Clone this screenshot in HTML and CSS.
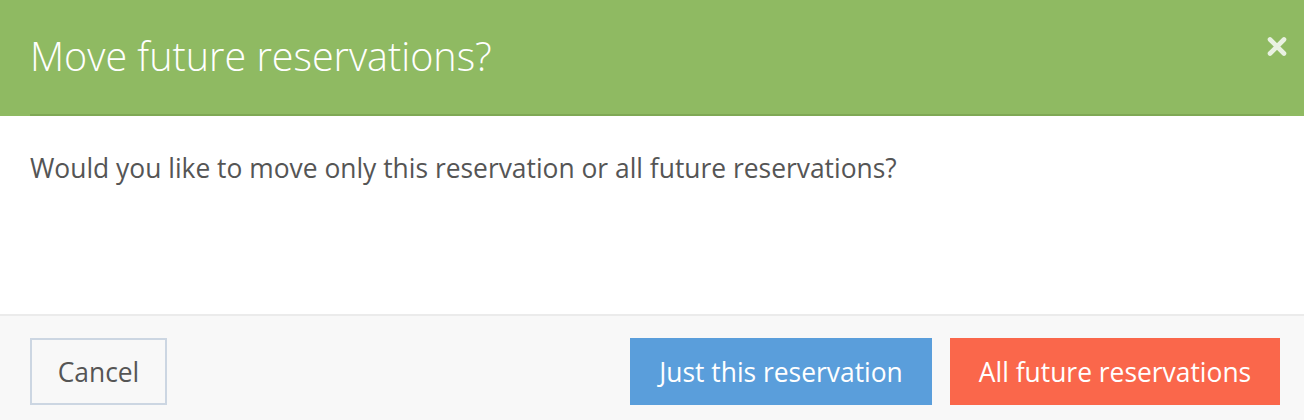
FILE: index.html
```html
<!DOCTYPE html>
<html>
<head>
<meta charset="utf-8">
<link rel="stylesheet" href="styles.css">
</head>
<body>
<div class="modal">
  <div class="header">
    <div class="header-inner">
      <h1 class="title">Move future reservations?</h1>
      <button class="close" aria-label="Close">
        <svg width="20" height="21" viewBox="0 0 20 21"><path d="M3 3.5 L17 17.5 M17 3.5 L3 17.5" stroke="#e9f1e2" stroke-width="4.6" stroke-linecap="round"/></svg>
      </button>
    </div>
  </div>
  <div class="body">
    <p class="message">Would you like to move only this reservation or all future reservations?</p>
  </div>
  <div class="footer">
    <button class="btn btn-cancel">Cancel</button>
    <div class="actions">
      <button class="btn btn-blue">Just this reservation</button>
      <button class="btn btn-orange">All future reservations</button>
    </div>
  </div>
</div>
</body>
</html>
```
FILE: styles.css
```css
* { box-sizing: border-box; }
html, body { margin: 0; padding: 0; }
body {
  width: 1304px;
  height: 420px;
  overflow: hidden;
  font-family: "Open Sans", "Liberation Sans", sans-serif;
  background: #fff;
}
.modal { display: flex; flex-direction: column; height: 420px; }
.header {
  background: #8fba62;
  padding: 0 24px 0 30px;
  height: 116px;
}
.header-inner {
  height: 116px;
  border-bottom: 2px solid #7fa855;
  display: flex;
  align-items: flex-start;
  justify-content: space-between;
  position: relative;
}
.title {
  margin: 0;
  padding-top: 27px;
  font-weight: 300;
  font-size: 39.5px;
  line-height: 58px;
  color: #fff;
}
.close {
  position: absolute;
  right: -7px;
  top: 36px;
  background: none;
  border: 0;
  padding: 0;
  width: 20px;
  height: 21px;
  display: block;
}
.close svg { display: block; }
.body {
  height: 200px;
  padding: 0 30px;
  border-bottom: 2px solid #ebebeb;
}
.message {
  margin: 0;
  padding-top: 34px;
  font-size: 26.4px;
  line-height: 36px;
  color: #555;
}
.footer {
  flex: 1;
  background: #f8f8f8;
  display: flex;
  justify-content: space-between;
  align-items: flex-start;
  padding: 22px 24px 0 30px;
}
.actions { display: flex; gap: 18px; }
.btn {
  font-family: "Open Sans", "Liberation Sans", sans-serif;
  font-size: 26.4px;
  height: 67px;
  border: 0;
  padding: 0;
  color: #fff;
}
.btn-cancel {
  width: 137px;
  background: #f8f8f8;
  border: 2px solid #ccd6e2;
  color: #555;
}
.btn-blue { width: 302px; background: #5a9edb; }
.btn-orange { width: 330px; background: #fa674b; }
```
